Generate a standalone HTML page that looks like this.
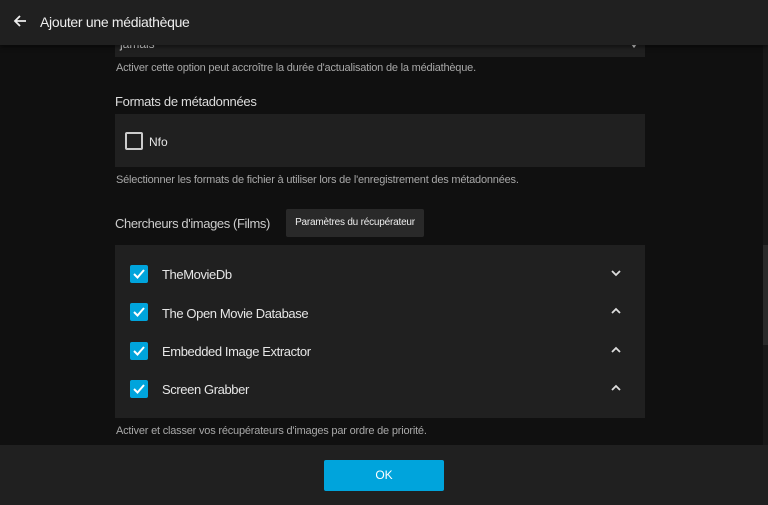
<!DOCTYPE html>
<html><head><meta charset="utf-8"><style>
*{margin:0;padding:0;box-sizing:border-box}
body{width:768px;height:505px;overflow:hidden;background:#101010;font-family:"Liberation Sans",sans-serif;color:#ddd;position:relative}
.a{position:absolute}
.hdr{left:0;top:0;width:768px;height:45px;background:#202020;box-shadow:0 2px 4px rgba(0,0,0,.5);z-index:2}
.ftr{left:0;top:445px;width:768px;height:60px;background:#202020}
.desc{font-size:11px;color:#a8a8a8;letter-spacing:-0.2px}
.box{background:#202020}
.cb{width:18px;height:18px;background:#00a4dc;border-radius:2px}
.row{font-size:13px;color:#e6e6e6;letter-spacing:-0.4px}
</style></head><body>
<div class="a hdr">
<svg class="a" style="left:12px;top:13px" width="16" height="16" viewBox="0 0 16 16"><path d="M14 8H3M8 3L3 8l5 5" stroke="#eee" stroke-width="1.8" fill="none"/></svg>
<div class="a" style="left:40px;top:14px;font-size:14px;color:#eee;letter-spacing:-0.3px">Ajouter une médiathèque</div>
</div>
<div class="a box" style="left:115px;top:30px;width:530px;height:27px"></div>
<div class="a" style="left:120px;top:37px;font-size:12px;color:#ddd">jamais</div>
<div class="a" style="left:631px;top:44px;width:0;height:0;border-left:3px solid transparent;border-right:3px solid transparent;border-top:4px solid #ddd"></div>
<div class="a desc" style="left:116px;top:62px">Activer cette option peut accroître la durée d'actualisation de la médiathèque.</div>
<div class="a" style="left:115px;top:94px;font-size:13px;color:#ddd;letter-spacing:-0.3px">Formats de métadonnées</div>
<div class="a box" style="left:115px;top:114px;width:530px;height:53px"></div>
<div class="a" style="left:125px;top:132px;width:18px;height:18px;border:2px solid #ccc;border-radius:2px"></div>
<div class="a" style="left:149px;top:135px;font-size:12px;color:#e6e6e6">Nfo</div>
<div class="a desc" style="left:116px;top:174px">Sélectionner les formats de fichier à utiliser lors de l'enregistrement des métadonnées.</div>
<div class="a" style="left:115px;top:216px;font-size:13px;color:#ccc;letter-spacing:-0.4px">Chercheurs d'images (Films)</div>
<div class="a" style="left:286px;top:209px;width:138px;height:28px;background:#292929;border-radius:2px;font-size:10px;color:#eee;text-align:center;line-height:28px;letter-spacing:-0.2px">Paramètres du récupérateur</div>
<div class="a box" style="left:115px;top:245px;width:530px;height:173px"></div>
<div class="a desc" style="left:116px;top:425px">Activer et classer vos récupérateurs d'images par ordre de priorité.</div>
<div class="a" style="left:763px;top:45px;width:5px;height:400px;background:#181818"></div>
<div class="a" style="left:763px;top:245px;width:5px;height:100px;background:#2a2a2a"></div>
<div class="a ftr"></div>
<div class="a" style="left:324px;top:460px;width:120px;height:31px;background:#00a4dc;border-radius:2px;color:#fff;font-size:12px;text-align:center;line-height:31px">OK</div>
<div class="a cb" style="left:130px;top:265px"></div>
<svg class="a" style="left:130px;top:265px" width="18" height="18"><path d="M4 9l3.5 3.5L14 5" stroke="#fff" stroke-width="2" fill="none"/></svg>
<div class="a row" style="left:162px;top:267px">TheMovieDb</div>
<svg class="a" style="left:611px;top:269px" width="10" height="8"><path d="M1 2l4 4 4-4" stroke="#ddd" stroke-width="1.8" fill="none"/></svg>
<div class="a cb" style="left:130px;top:303px"></div>
<svg class="a" style="left:130px;top:303px" width="18" height="18"><path d="M4 9l3.5 3.5L14 5" stroke="#fff" stroke-width="2" fill="none"/></svg>
<div class="a row" style="left:162px;top:306px">The Open Movie Database</div>
<svg class="a" style="left:611px;top:307px" width="10" height="8"><path d="M1 6l4-4 4 4" stroke="#ddd" stroke-width="1.8" fill="none"/></svg>
<div class="a cb" style="left:130px;top:342px"></div>
<svg class="a" style="left:130px;top:342px" width="18" height="18"><path d="M4 9l3.5 3.5L14 5" stroke="#fff" stroke-width="2" fill="none"/></svg>
<div class="a row" style="left:162px;top:344px">Embedded Image Extractor</div>
<svg class="a" style="left:611px;top:346px" width="10" height="8"><path d="M1 6l4-4 4 4" stroke="#ddd" stroke-width="1.8" fill="none"/></svg>
<div class="a cb" style="left:130px;top:380px"></div>
<svg class="a" style="left:130px;top:380px" width="18" height="18"><path d="M4 9l3.5 3.5L14 5" stroke="#fff" stroke-width="2" fill="none"/></svg>
<div class="a row" style="left:162px;top:382px">Screen Grabber</div>
<svg class="a" style="left:611px;top:384px" width="10" height="8"><path d="M1 6l4-4 4 4" stroke="#ddd" stroke-width="1.8" fill="none"/></svg>
</body></html>
